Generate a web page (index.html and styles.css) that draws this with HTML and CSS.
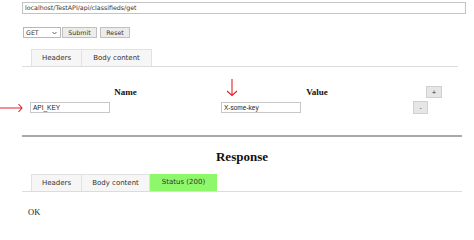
FILE: index.html
```html
<!DOCTYPE html>
<html>
<head>
<meta charset="utf-8">
<link rel="stylesheet" href="styles.css">
</head>
<body>
<div class="page">
  <div class="url">localhost/TestAPI/api/classifieds/get</div>
  <div class="controls">
    <div class="select"><span>GET</span><svg class="chev" width="5" height="4" viewBox="0 0 5 4"><path d="M0.5 1 L2.5 3 L4.5 1" fill="none" stroke="#555" stroke-width="0.9"/></svg></div>
    <div class="btn submit">Submit</div>
    <div class="btn reset">Reset</div>
  </div>
  <div class="tabs req-tabs">
    <div class="tab t-headers">Headers</div>
    <div class="tab t-body">Body content</div>
  </div>
  <div class="kv">
    <div class="th">Name</div>
    <div class="th">Value</div>
    <div class="cell-btn"><div class="sbtn plus">+</div></div>
    <div class="cell"><div class="field f-name">API_KEY</div></div>
    <div class="cell"><div class="field f-value">X-some-key</div></div>
    <div class="cell-btn"><div class="sbtn minus">-</div></div>
  </div>
  <div class="rule"></div>
  <h2 class="resp-title">Response</h2>
  <div class="tabs resp-tabs">
    <div class="tab t-headers">Headers</div>
    <div class="tab t-body2">Body content</div>
    <div class="tab t-status">Status (200)</div>
  </div>
  <div class="ok">OK</div>
</div>
<svg class="arrow-left" width="24" height="12" viewBox="0 0 24 12"><path d="M0 6 H21.5 M18.5 2 L22 6 L18.5 10" fill="none" stroke="#e2232b" stroke-width="1.1"/></svg>
<svg class="arrow-down" width="14" height="18" viewBox="0 0 14 18"><path d="M7 0 V16.5 M2 12 L7 16.5 L12 12" fill="none" stroke="#e2232b" stroke-width="1.1"/></svg>
</body>
</html>
```
FILE: styles.css
```css
html, body {
  margin: 0;
  padding: 0;
  background: #fff;
}
body {
  position: relative;
  width: 474px;
  height: 223px;
  overflow: hidden;
  font-family: "DejaVu Sans", Verdana, sans-serif;
  color: #222;
}
.page {
  padding: 2px 0 0 22px;
  width: 440px;
}
.url {
  box-sizing: border-box;
  width: 444px;
  height: 12px;
  border: 1px solid #c4c4c4;
  font-size: 6.3px;
  line-height: 10px;
  padding-left: 2px;
  color: #333;
}
.controls {
  display: flex;
  align-items: center;
  margin-top: 13px;
  height: 11px;
}
.select {
  box-sizing: border-box;
  margin-left: 1px;
  width: 38px;
  height: 11px;
  border: 1px solid #b8b8b8;
  display: flex;
  align-items: center;
  justify-content: space-between;
  padding: 0 3px 0 2px;
  font-size: 6.3px;
  color: #333;
}
.chev { display: block; }
.btn {
  box-sizing: border-box;
  height: 11px;
  border: 1px solid #c0c0c0;
  background: #ececec;
  font-size: 6.3px;
  line-height: 9px;
  text-align: center;
  color: #333;
}
.submit { width: 35px; margin-left: 1px; }
.reset { width: 30px; margin-left: 3px; }
.tabs {
  display: flex;
  box-sizing: border-box;
  border-bottom: 1px solid #dcdcdc;
  padding-left: 9px;
}
.req-tabs {
  margin-top: 11px;
  width: 436px;
}
.tab {
  box-sizing: border-box;
  height: 17px;
  background: #f6f6f6;
  border: 1px solid #e2e2e2;
  border-bottom: none;
  font-size: 7px;
  line-height: 16px;
  text-align: center;
  color: #333;
}
.t-headers { width: 51px; }
.t-body { width: 70px; border-left: none; }
.t-body2 { width: 68px; border-left: none; }
.t-status { width: 67px; border: none; background: #8ef86a; }
.kv {
  display: grid;
  grid-template-columns: 191px 192px 45px;
  grid-template-rows: 12px 13px;
  row-gap: 3px;
  margin: 19px 0 0 8px;
}
.th {
  font-family: "Liberation Serif", "Times New Roman", serif;
  font-weight: bold;
  font-size: 9px;
  line-height: 12px;
  text-align: center;
  color: #111;
}
.cell { display: flex; align-items: center; }
.cell-btn { display: flex; align-items: center; }
.field {
  box-sizing: border-box;
  width: 80px;
  height: 11px;
  border: 1px solid #c8c8c8;
  font-family: "Liberation Sans", Arial, sans-serif;
  font-size: 6.5px;
  line-height: 9px;
  padding-left: 2px;
  color: #222;
}
.sbtn {
  box-sizing: border-box;
  width: 16px;
  height: 12px;
  background: #e6e6e6;
  border: 1px solid #d0d0d0;
  font-size: 6px;
  line-height: 10px;
  text-align: center;
  color: #333;
}
.plus { margin-left: 13px; }
.minus { width: 15px; height: 13px; margin-left: 0; line-height: 11px; }
.rule {
  margin-top: 21px;
  width: 440px;
  height: 0;
  border-top: 2px solid #a8a8a8;
}
.resp-title {
  margin: 12px 0 0 0;
  font-family: "Liberation Serif", "Times New Roman", serif;
  font-weight: bold;
  font-size: 13px;
  line-height: 15px;
  text-align: center;
  color: #111;
}
.resp-tabs {
  margin-top: 10px;
  width: 440px;
}
.ok {
  margin: 15px 0 0 6px;
  font-family: "Liberation Serif", "Times New Roman", serif;
  font-size: 8.5px;
  line-height: 10px;
  color: #222;
}
.arrow-left {
  position: absolute;
  left: 0;
  top: 102px;
}
.arrow-down {
  position: absolute;
  left: 225px;
  top: 79px;
}
```
